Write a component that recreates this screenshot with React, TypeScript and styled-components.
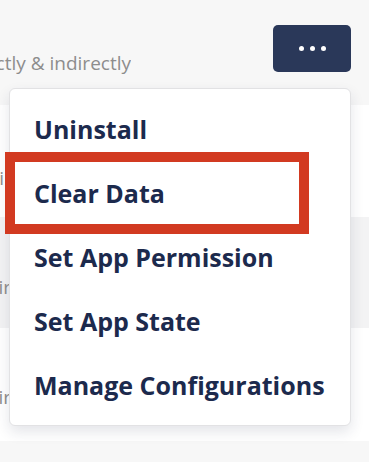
import React from "react";
import styled, { createGlobalStyle } from "styled-components";

const Global = createGlobalStyle`
  html, body { margin: 0; padding: 0; background: #ffffff; }
  body { font-family: "Open Sans", "Noto Sans", "Liberation Sans", sans-serif; overflow: hidden; }
`;

const Page = styled.div`
  position: relative;
  width: 369px;
  height: 462px;
  overflow: hidden;
  display: flex;
  flex-direction: column;
  background: #f7f7f7;
`;

const Row = styled.div<{ $bg: string; $h: number }>`
  flex: 0 0 ${(p) => p.$h}px;
  height: ${(p) => p.$h}px;
  background: ${(p) => p.$bg};
  display: flex;
  align-items: flex-start;
  justify-content: space-between;
  box-sizing: border-box;
  padding: 0 18px 0 0;
`;

const HeaderRow = styled(Row)`
  padding-top: 25px;
`;

const SubClip = styled.div<{ $w: number; $top: number }>`
  width: ${(p) => p.$w}px;
  margin-top: ${(p) => p.$top}px;
  display: flex;
  justify-content: flex-end;
  overflow: hidden;
  white-space: nowrap;
  font-size: 19px;
  line-height: 22px;
  color: #8d8d8d;
`;

const MoreButton = styled.button`
  width: 78px;
  height: 47px;
  border: none;
  border-radius: 5px;
  background: #2a3859;
  display: flex;
  align-items: center;
  justify-content: center;
  gap: 6px;
  padding: 0;
  cursor: pointer;
`;

const Dot = styled.span`
  width: 5px;
  height: 5px;
  border-radius: 50%;
  background: #ffffff;
`;

const Menu = styled.ul`
  position: absolute;
  top: 88px;
  right: 18px;
  width: 342px;
  box-sizing: border-box;
  margin: 0;
  padding: 8px 0;
  list-style: none;
  background: #ffffff;
  border: 1px solid #e2e2e4;
  border-radius: 6px;
  box-shadow: 0 6px 14px rgba(30, 40, 70, 0.12);
`;

const Item = styled.li`
  height: 64px;
  display: flex;
  align-items: center;
  padding-left: 24px;
  font-size: 25px;
  font-weight: 700;
  color: #1c2a4d;
  white-space: nowrap;
`;

const Highlight = styled.div`
  position: absolute;
  left: 5px;
  top: 152px;
  width: 304px;
  height: 82px;
  box-sizing: border-box;
  border: 10px solid #d23a21;
  pointer-events: none;
`;

const items = [
  "Uninstall",
  "Clear Data",
  "Set App Permission",
  "Set App State",
  "Manage Configurations",
];

export default function App() {
  return (
    <>
      <Global />
      <Page>
        <HeaderRow $bg="#f7f7f7" $h={105}>
          <SubClip $w={131} $top={27}>Affects directly &amp; indirectly</SubClip>
          <MoreButton aria-label="More actions">
            <Dot />
            <Dot />
            <Dot />
          </MoreButton>
        </HeaderRow>
        <Row $bg="#ffffff" $h={112}>
          <SubClip $w={4} $top={62}>Used i</SubClip>
        </Row>
        <Row $bg="#f3f3f4" $h={111}>
          <SubClip $w={11} $top={59}>Used ir</SubClip>
        </Row>
        <Row $bg="#ffffff" $h={113}>
          <SubClip $w={11} $top={58}>Used ir</SubClip>
        </Row>
        <Row $bg="#f7f7f7" $h={30} />
        <Menu>
          {items.map((t) => (
            <Item key={t}>{t}</Item>
          ))}
        </Menu>
        <Highlight />
      </Page>
    </>
  );
}
